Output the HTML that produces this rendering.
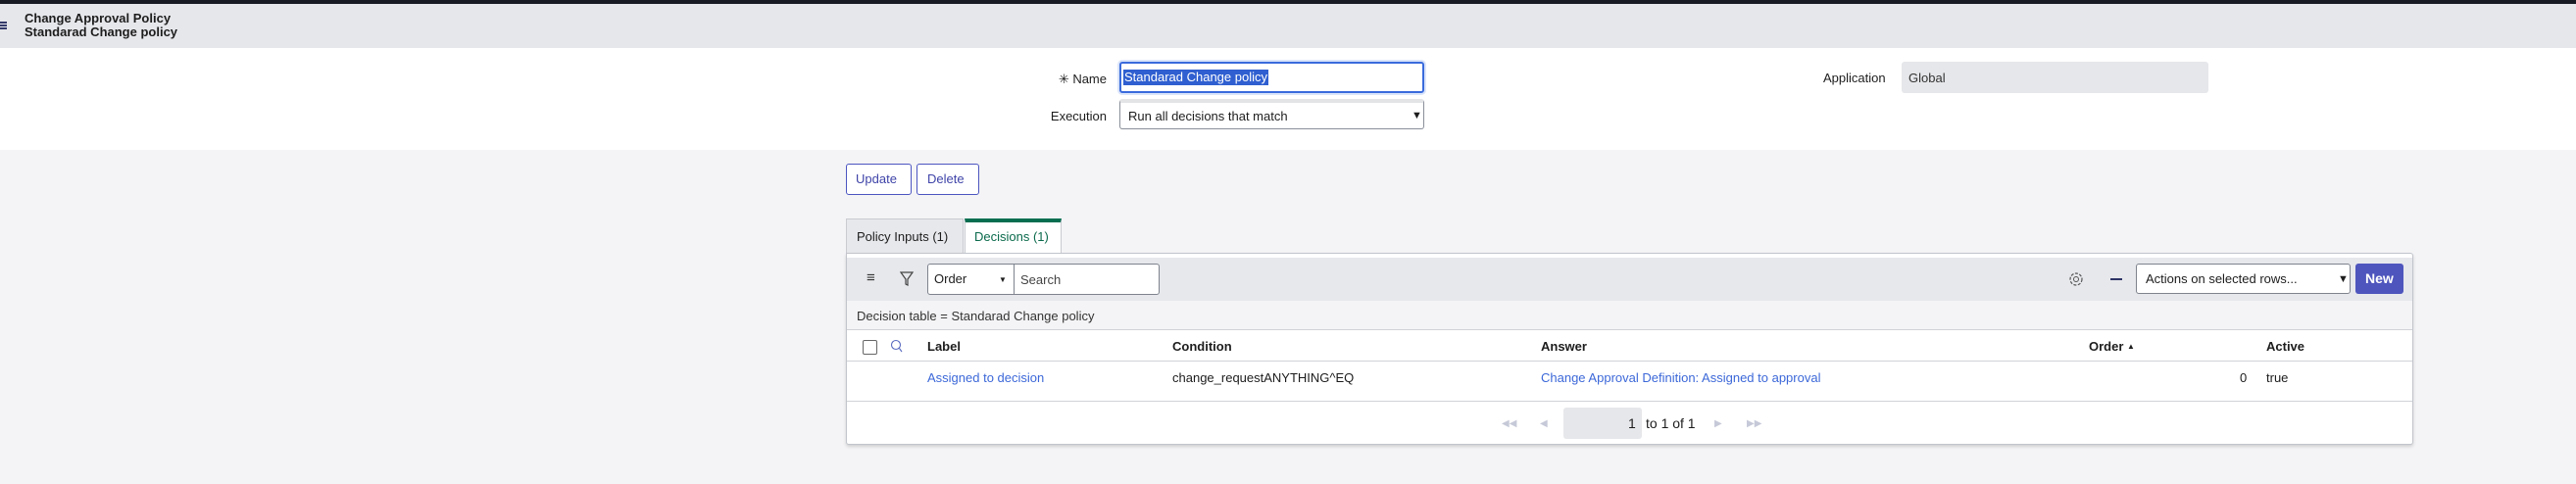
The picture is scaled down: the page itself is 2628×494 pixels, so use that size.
<!DOCTYPE html>
<html><head><meta charset="utf-8"><style>
*{box-sizing:border-box;margin:0;padding:0}
body{width:2628px;height:494px;overflow:hidden;background:#f4f4f6;font-family:"Liberation Sans",sans-serif;font-size:13px;color:#1d1d1d;position:relative}
.a{position:absolute}
.t{position:absolute;white-space:nowrap;line-height:16px}
.lnk{color:#3c68d8}
</style></head><body>
<div class="a" style="left:0;top:0;width:2628px;height:4px;background:#181a24"></div>
<div class="a" style="left:0;top:4px;width:2628px;height:45px;background:#e6e7eb"></div>
<div class="a" style="left:0;top:22px;width:7px;height:8px;border-top:2px solid #333a6a;border-bottom:2px solid #333a6a"></div>
<div class="a" style="left:0;top:25px;width:7px;height:2px;background:#333a6a"></div>
<div class="t" style="left:25px;top:11px;font-weight:bold">Change Approval Policy</div>
<div class="t" style="left:25px;top:25px;font-weight:bold">Standarad Change policy</div>
<div class="a" style="left:0;top:49px;width:2628px;height:104px;background:#fff"></div>
<div class="t" style="left:1060px;top:73px;width:69px;text-align:right">✳ Name</div>
<div class="a" style="left:1142px;top:63px;width:311px;height:32px;border:2px solid #3a6bdc;border-radius:3px;box-shadow:0 0 0 2px #dbe5fa"></div>
<div class="t" style="left:1146px;top:71px;background:#2f5fd0;color:#fff;padding:0 1px">Standarad Change policy</div>
<div class="t" style="left:1050px;top:111px;width:79px;text-align:right">Execution</div>
<div class="a" style="left:1142px;top:101px;width:311px;height:31px;border:1px solid #8a8f99;border-top:4px solid #e3e4e6;border-radius:3px;background:#fff"></div>
<div class="t" style="left:1151px;top:111px">Run all decisions that match</div>
<div class="t" style="left:1440px;top:110px;font-size:11px">&#9660;</div>
<div class="t" style="left:1860px;top:72px">Application</div>
<div class="a" style="left:1940px;top:63px;width:313px;height:32px;background:#e6e7ea;border-radius:3px"></div>
<div class="t" style="left:1947px;top:72px;color:#333">Global</div>
<div class="a" style="left:863px;top:167px;width:67px;height:32px;border:1px solid #4c55c0;border-radius:3px;background:#fff"></div>
<div class="t" style="left:873px;top:175px;color:#3f44a8">Update</div>
<div class="a" style="left:935px;top:167px;width:64px;height:32px;border:1px solid #4c55c0;border-radius:3px;background:#fff"></div>
<div class="t" style="left:946px;top:175px;color:#3f44a8">Delete</div>
<div class="a" style="left:863px;top:223px;width:120px;height:36px;background:#e7e8ec;border:1px solid #c9cbd1;border-bottom:none"></div>
<div class="t" style="left:874px;top:234px">Policy Inputs (1)</div>
<div class="a" style="left:984px;top:223px;width:99px;height:37px;background:#fff;border:1px solid #c9cbd1;border-top:4px solid #056e50;border-bottom:none"></div>
<div class="t" style="left:994px;top:234px;color:#0b6a4c">Decisions (1)</div>
<div class="a" style="left:863px;top:258px;width:1599px;height:196px;background:#fff;border:1px solid #c2c5cc;border-radius:0 3px 3px 3px;box-shadow:0 2px 3px rgba(0,0,0,.15)"></div>
<div class="a" style="left:864px;top:263px;width:1597px;height:44px;background:#e7e8ec"></div>
<div class="t" style="left:884px;top:276px;font-size:15px;color:#333">≡</div>
<svg class="a" style="left:918px;top:276px" width="14" height="16"><path d="M1 2H13L8 9V15L6 14V9Z" fill="none" stroke="#444" stroke-width="1.2"/></svg>
<div class="a" style="left:946px;top:269px;width:237px;height:32px;border:1px solid #7e838d;border-radius:3px;background:#fff"></div>
<div class="a" style="left:1034px;top:269px;width:1px;height:32px;background:#7e838d"></div>
<div class="t" style="left:953px;top:277px">Order</div>
<div class="t" style="left:1019px;top:278px;font-size:8px">&#9660;</div>
<div class="t" style="left:1041px;top:278px;color:#444">Search</div>
<svg class="a" style="left:2110px;top:277px" width="16" height="16"><circle cx="8" cy="8" r="6" fill="none" stroke="#555" stroke-width="1.2" stroke-dasharray="3 1.5"/><circle cx="8" cy="8" r="2.5" fill="none" stroke="#555"/></svg>
<div class="a" style="left:2153px;top:284px;width:12px;height:1.5px;background:#2d3466"></div>
<div class="a" style="left:2179px;top:269px;width:219px;height:31px;border:1px solid #7e838d;border-radius:3px;background:#fff"></div>
<div class="t" style="left:2189px;top:277px">Actions on selected rows...</div>
<div class="t" style="left:2385px;top:277px;font-size:11px">&#9660;</div>
<div class="a" style="left:2403px;top:269px;width:49px;height:31px;background:#4e55bd;border-radius:3px"></div>
<div class="t" style="left:2413px;top:276px;color:#fff;font-weight:bold;font-size:14px">New</div>
<div class="a" style="left:864px;top:307px;width:1597px;height:30px;background:#f4f4f6;border-bottom:1px solid #d0d2d7"></div>
<div class="t" style="left:874px;top:315px;color:#333">Decision table = Standarad Change policy</div>
<div class="a" style="left:864px;top:368px;width:1597px;height:1px;background:#d0d2d7"></div>
<div class="a" style="left:880px;top:347px;width:15px;height:15px;border:1px solid #666;border-radius:2px"></div>
<svg class="a" style="left:908px;top:346px" width="14" height="16"><circle cx="6" cy="6" r="4.5" fill="none" stroke="#5a6bc0" stroke-width="1.1"/><path d="M9.5 9.5L12 13" stroke="#5a6bc0" stroke-width="1.1"/></svg>
<div class="t" style="left:946px;top:346px;font-weight:bold">Label</div>
<div class="t" style="left:1196px;top:346px;font-weight:bold">Condition</div>
<div class="t" style="left:1572px;top:346px;font-weight:bold">Answer</div>
<div class="t" style="left:2131px;top:346px;font-weight:bold">Order <span style="font-size:8px;vertical-align:2px">&#9650;</span></div>
<div class="t" style="left:2312px;top:346px;font-weight:bold">Active</div>
<div class="a" style="left:864px;top:409px;width:1597px;height:1px;background:#d0d2d7"></div>
<div class="t lnk" style="left:946px;top:378px">Assigned to decision</div>
<div class="t" style="left:1196px;top:378px">change_requestANYTHING^EQ</div>
<div class="t lnk" style="left:1572px;top:378px">Change Approval Definition: Assigned to approval</div>
<div class="t" style="left:2285px;top:378px">0</div>
<div class="t" style="left:2312px;top:378px">true</div>
<div class="t" style="left:1532px;top:425px;color:#c6c9d8;font-size:10px">&#9664;&#9664;</div>
<div class="t" style="left:1571px;top:425px;color:#c6c9d8;font-size:10px">&#9664;</div>
<div class="a" style="left:1595px;top:416px;width:80px;height:32px;background:#e6e7ea;border-radius:3px"></div>
<div class="t" style="left:1661px;top:424px;font-size:14px">1</div>
<div class="t" style="left:1679px;top:424px;font-size:14px">to 1 of 1</div>
<div class="t" style="left:1749px;top:425px;color:#c6c9d8;font-size:10px">&#9654;</div>
<div class="t" style="left:1782px;top:425px;color:#c6c9d8;font-size:10px">&#9654;&#9654;</div>
</body></html>
